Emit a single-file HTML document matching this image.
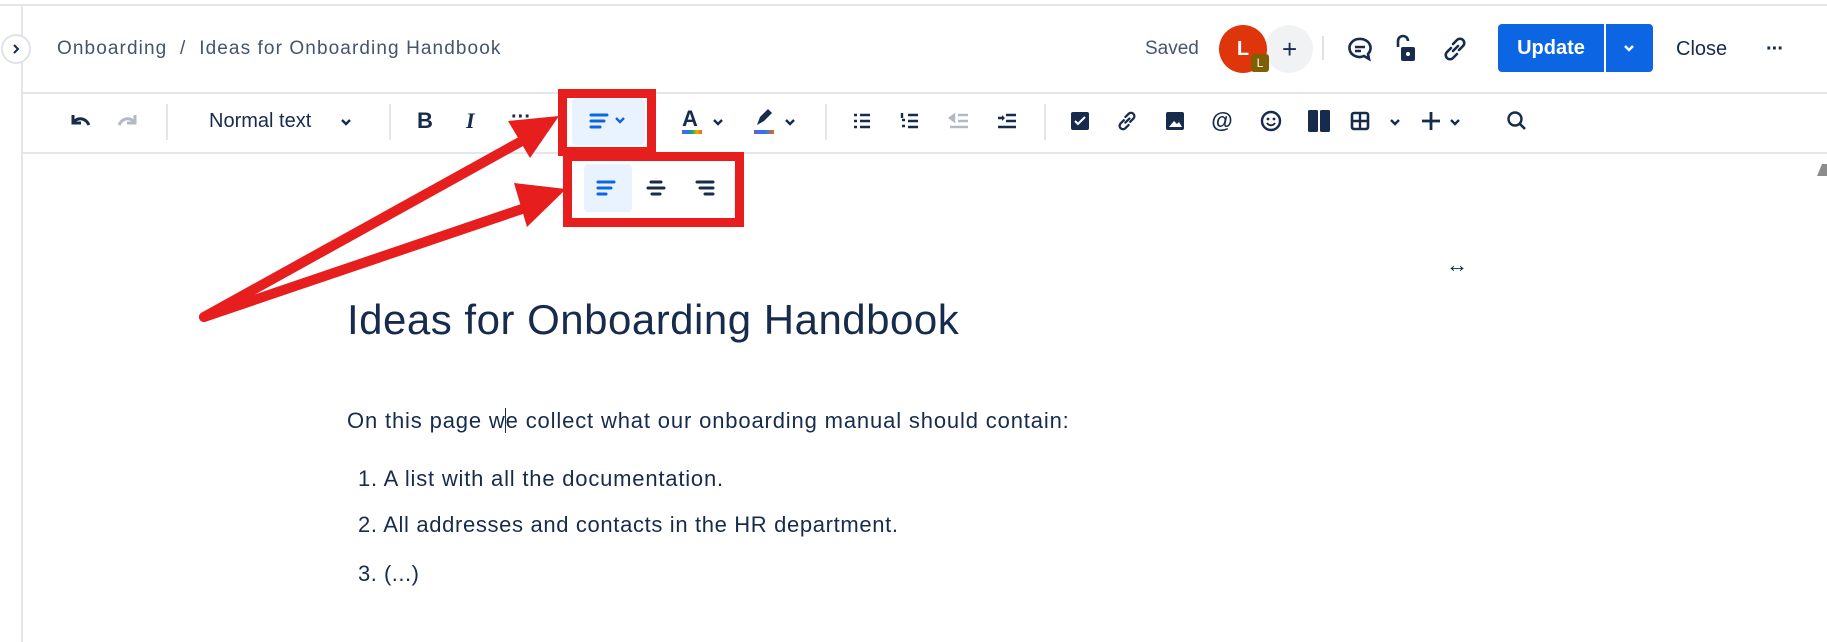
<!DOCTYPE html>
<html><head><meta charset="utf-8"><style>
*{margin:0;padding:0;box-sizing:border-box}
body{width:1827px;height:642px;background:#fff;position:relative;overflow:hidden;font-family:"Liberation Sans",sans-serif;color:#172b4d}
.a{position:absolute}
.ic{position:absolute;transform:translate(-50%,-50%)}
</style></head><body>
<div class="a" style="left:0;top:4px;width:1827px;height:2px;background:#e4e6ea"></div>
<div class="a" style="left:21px;top:5px;width:2px;height:637px;background:#e4e6ea"></div>
<div class="a" style="left:22px;top:92px;width:1805px;height:2px;background:#e4e6ea"></div>
<div class="a" style="left:22px;top:152px;width:1805px;height:2px;background:#e4e6ea"></div>
<div class="a" style="left:1px;top:34px;width:30px;height:30px;border-radius:50%;border:2px solid #e1e3e8;background:#fff"></div>
<svg class="a" style="left:10px;top:43px" width="12" height="12" viewBox="0 0 12 12"><path d="M4 2l4 4-4 4" stroke="#172b4d" stroke-width="2" fill="none"/></svg>
<div class="a" style="left:57px;top:38px;font-size:19px;color:#44546f;letter-spacing:1.1px;white-space:nowrap">Onboarding&nbsp;&nbsp;/&nbsp;&nbsp;Ideas for Onboarding Handbook</div>
<div class="a" style="left:1145px;top:38px;font-size:19px;color:#44546f">Saved</div>
<div class="a" style="left:1265px;top:25px;width:48px;height:48px;border-radius:50%;background:#f1f2f4"></div>
<div class="a" style="left:1282px;top:37px;font-size:26px;color:#172b4d;line-height:24px">+</div>
<div class="a" style="left:1219px;top:25px;width:48px;height:48px;border-radius:50%;background:#de350b;color:#fff;font-size:20px;text-align:center;line-height:48px;font-weight:bold">L</div>
<div class="a" style="left:1251px;top:54px;width:18px;height:18px;border-radius:3px;background:#7f5f01;color:#fff;font-size:12px;text-align:center;line-height:18px">L</div>
<div class="a" style="left:1322px;top:36px;width:2px;height:24px;background:#dfe1e6"></div>
<svg class="ic" style="left:1360px;top:49px" width="28" height="28" viewBox="0 0 28 28"><path d="M14 4a10 9 0 1 0 4 17l5 3-1-5A10 9 0 0 0 14 4z" fill="none" stroke="#172b4d" stroke-width="2.6"/><path d="M9 12h10M9 16h6" stroke="#172b4d" stroke-width="2.6"/></svg>
<svg class="ic" style="left:1405px;top:49px" width="24" height="30" viewBox="0 0 24 30"><path d="M5 13V7a5 5 0 0 1 10 0" fill="none" stroke="#172b4d" stroke-width="2.6"/><rect x="8" y="13" width="14" height="14" rx="2" fill="#172b4d"/><circle cx="15" cy="20" r="2" fill="#fff"/></svg>
<svg class="ic" style="left:1455px;top:49px" width="30" height="30" viewBox="0 0 30 30"><path d="M13 17l5-5M11 14l-4 4a4 4 0 0 0 6 6l4-4M19 16l4-4a4 4 0 0 0-6-6l-4 4" fill="none" stroke="#172b4d" stroke-width="2.6" stroke-linecap="round"/></svg>
<div class="a" style="left:1498px;top:24px;width:106px;height:48px;background:#0c66e4;border-radius:4px 0 0 4px;color:#fff;font-size:20px;font-weight:bold;text-align:center;line-height:48px">Update</div>
<div class="a" style="left:1606px;top:24px;width:47px;height:48px;background:#0c66e4;border-radius:0 4px 4px 0"></div>
<svg class="ic" style="left:1629px;top:48px" width="14" height="10" viewBox="0 0 14 10"><path d="M3 3l4 4 4-4" stroke="#fff" stroke-width="2.4" fill="none"/></svg>
<div class="a" style="left:1676px;top:38px;font-size:20px;color:#172b4d">Close</div>
<div class="a" style="left:1766px;top:38px;font-size:20px;font-weight:bold;letter-spacing:-1px">···</div>
<svg class="ic" style="left:80px;top:121px" width="26" height="20" viewBox="0 0 26 20"><path d="M6 4v8h8M6 12c4-6 12-6 16 2" fill="none" stroke="#172b4d" stroke-width="3"/></svg>
<svg class="ic" style="left:128px;top:121px" width="26" height="20" viewBox="0 0 26 20"><path d="M20 4v8h-8M20 12c-4-6-12-6-16 2" fill="none" stroke="#b3b9c4" stroke-width="3"/></svg>
<div class="a" style="left:166px;top:104px;width:2px;height:36px;background:#e4e6ea"></div>
<div class="a" style="left:209px;top:110px;font-size:20px">Normal text</div>
<svg class="ic" style="left:346px;top:122px" width="14" height="10" viewBox="0 0 14 10"><path d="M3 3l4 4 4-4" stroke="#172b4d" stroke-width="2.4" fill="none"/></svg>
<div class="a" style="left:389px;top:104px;width:2px;height:36px;background:#e4e6ea"></div>
<div class="a" style="left:417px;top:108px;font-size:22px;font-weight:bold">B</div>
<div class="a" style="left:466px;top:108px;font-size:22px;font-weight:bold;font-style:italic;font-family:'Liberation Serif',serif">I</div>
<div class="a" style="left:511px;top:106px;font-size:20px;font-weight:bold">···</div>
<div class="a" style="left:572px;top:98px;width:73px;height:47px;background:#e9f2ff;border-radius:4px"></div>
<svg class="ic" style="left:609px;top:121px" width="48" height="24" viewBox="0 0 48 24"><path d="M6 6h16M6 12h13M6 18h9" stroke="#0c66e4" stroke-width="3" stroke-linecap="round"/><path d="M31 9l4 4 4-4" stroke="#0c66e4" stroke-width="2.4" fill="none"/></svg>
<div class="a" style="left:682px;top:106px;font-size:22px;font-weight:bold">A</div>
<div class="a" style="left:682px;top:130px;width:20px;height:4px;background:linear-gradient(90deg,#6e5dc6,#1d7afc,#22a06b,#e2b203,#e56910)"></div>
<svg class="ic" style="left:718px;top:122px" width="14" height="10" viewBox="0 0 14 10"><path d="M3 3l4 4 4-4" stroke="#172b4d" stroke-width="2.4" fill="none"/></svg>
<svg class="ic" style="left:764px;top:118px" width="22" height="22" viewBox="0 0 22 22"><path d="M4 18l3-8 8-8 4 4-8 8z" fill="#172b4d"/></svg>
<div class="a" style="left:754px;top:130px;width:20px;height:4px;background:linear-gradient(90deg,#6e5dc6,#1d7afc,#e56910)"></div>
<svg class="ic" style="left:790px;top:122px" width="14" height="10" viewBox="0 0 14 10"><path d="M3 3l4 4 4-4" stroke="#172b4d" stroke-width="2.4" fill="none"/></svg>
<div class="a" style="left:825px;top:104px;width:2px;height:36px;background:#e4e6ea"></div>
<svg class="ic" style="left:862px;top:121px" width="20" height="20" viewBox="0 0 20 20"><path d="M2 4h3M8 4h10M2 10h3M8 10h10M2 16h3M8 16h10" stroke="#172b4d" stroke-width="2.6"/></svg>
<svg class="ic" style="left:910px;top:121px" width="20" height="20" viewBox="0 0 20 20"><path d="M2 2v5M8 4h10M2 9h3M8 10h10M2 15h3M8 16h10" stroke="#172b4d" stroke-width="2.4"/></svg>
<svg class="ic" style="left:959px;top:121px" width="22" height="20" viewBox="0 0 22 20"><path d="M10 4h10M10 10h10M2 16h18M2 7l4-3v6z" stroke="#b3b9c4" stroke-width="2.4" fill="#b3b9c4"/></svg>
<svg class="ic" style="left:1007px;top:121px" width="22" height="20" viewBox="0 0 22 20"><path d="M10 4h10M10 10h10M2 16h18M2 7h5" stroke="#172b4d" stroke-width="2.4"/><path d="M6 4l3 3-3 3z" fill="#172b4d"/></svg>
<div class="a" style="left:1044px;top:104px;width:2px;height:36px;background:#e4e6ea"></div>
<svg class="ic" style="left:1080px;top:121px" width="20" height="20" viewBox="0 0 20 20"><rect x="1" y="1" width="18" height="18" rx="2" fill="#172b4d"/><path d="M5 10l3 3 7-7" stroke="#fff" stroke-width="2" fill="none"/></svg>
<svg class="ic" style="left:1127px;top:121px" width="24" height="24" viewBox="0 0 30 30"><path d="M13 17l5-5M11 14l-4 4a4 4 0 0 0 6 6l4-4M19 16l4-4a4 4 0 0 0-6-6l-4 4" fill="none" stroke="#172b4d" stroke-width="2.8" stroke-linecap="round"/></svg>
<svg class="ic" style="left:1175px;top:121px" width="20" height="20" viewBox="0 0 20 20"><rect x="1" y="1" width="18" height="18" rx="2" fill="#172b4d"/><path d="M4 16l5-6 3 3 2-2 3 5z" fill="#fff"/></svg>
<div class="ic" style="left:1222px;top:121px;font-size:22px;font-weight:bold">@</div>
<svg class="ic" style="left:1271px;top:121px" width="22" height="22" viewBox="0 0 22 22"><circle cx="11" cy="11" r="9" fill="none" stroke="#172b4d" stroke-width="2.4"/><circle cx="8" cy="9" r="1.4" fill="#172b4d"/><circle cx="14" cy="9" r="1.4" fill="#172b4d"/><path d="M7 13c2 3 6 3 8 0" stroke="#172b4d" stroke-width="2" fill="none"/></svg>
<svg class="ic" style="left:1319px;top:121px" width="24" height="24" viewBox="0 0 24 24"><rect x="1" y="1" width="10" height="22" rx="1.5" fill="#172b4d"/><rect x="13" y="1" width="10" height="22" rx="1.5" fill="#172b4d"/></svg>
<svg class="ic" style="left:1360px;top:121px" width="20" height="20" viewBox="0 0 20 20"><rect x="2" y="2" width="16" height="16" rx="2" fill="none" stroke="#172b4d" stroke-width="2.6"/><path d="M10 2v16M2 10h16" stroke="#172b4d" stroke-width="2.4"/></svg>
<svg class="ic" style="left:1395px;top:122px" width="14" height="10" viewBox="0 0 14 10"><path d="M3 3l4 4 4-4" stroke="#172b4d" stroke-width="2.4" fill="none"/></svg>
<svg class="ic" style="left:1431px;top:121px" width="22" height="22" viewBox="0 0 22 22"><path d="M11 2v18M2 11h18" stroke="#172b4d" stroke-width="2.8"/></svg>
<svg class="ic" style="left:1455px;top:122px" width="14" height="10" viewBox="0 0 14 10"><path d="M3 3l4 4 4-4" stroke="#172b4d" stroke-width="2.4" fill="none"/></svg>
<svg class="ic" style="left:1517px;top:121px" width="22" height="22" viewBox="0 0 22 22"><circle cx="9" cy="9" r="6.5" fill="none" stroke="#172b4d" stroke-width="2.4"/><path d="M14 14l5 5" stroke="#172b4d" stroke-width="2.6"/></svg>
<svg class="a" style="left:1815px;top:162px" width="12" height="14" viewBox="0 0 12 14"><path d="M2 14L7 2h5v12z" fill="#8c8c8c"/></svg>
<div class="a" style="left:572px;top:161px;width:162px;height:57px;background:#fff;box-shadow:0 4px 10px rgba(9,30,66,.15)"></div>
<div class="a" style="left:584px;top:164px;width:48px;height:48px;background:#e9f2ff;border-radius:4px"></div>
<svg class="ic" style="left:606px;top:188px" width="22" height="20" viewBox="0 0 22 20"><path d="M3 4h16M3 10h13M3 16h8" stroke="#0c66e4" stroke-width="3" stroke-linecap="round"/></svg>
<svg class="ic" style="left:656px;top:188px" width="22" height="20" viewBox="0 0 22 20"><path d="M6 4h10M3 10h16M7 16h8" stroke="#172b4d" stroke-width="3" stroke-linecap="round"/></svg>
<svg class="ic" style="left:705px;top:188px" width="22" height="20" viewBox="0 0 22 20"><path d="M3 4h16M6 10h13M11 16h8" stroke="#172b4d" stroke-width="3" stroke-linecap="round"/></svg>
<div class="a" style="left:558px;top:89px;width:98px;height:67px;border:9px solid #e61e1e"></div>
<div class="a" style="left:563px;top:152px;width:181px;height:75px;border:9px solid #e61e1e"></div>
<svg class="a" style="left:0;top:0" width="1827" height="642" viewBox="0 0 1827 642">
<g stroke="#e61e1e" stroke-width="10" stroke-linecap="round"><path d="M204 317L520 142"/><path d="M204 317L525 208"/></g>
<path d="M559 116L508 121L530 158z" fill="#e61e1e"/>
<path d="M566 189L514 183L527 227z" fill="#e61e1e"/>
</svg>
<div class="a" style="left:1446px;top:252px;font-size:22px;font-weight:bold">↔</div>
<div class="a" style="left:347px;top:296px;font-size:42px;color:#172b4d;white-space:nowrap;letter-spacing:0.5px">Ideas for Onboarding Handbook</div>
<div class="a" style="left:347px;top:408px;font-size:22px;white-space:nowrap;letter-spacing:0.85px">On this page w<span style="border-left:1.5px solid #172b4d;margin-left:-1px"></span>e collect what our onboarding manual should contain:</div>
<div class="a" style="left:358px;top:466px;font-size:22px;white-space:nowrap;letter-spacing:0.8px">1. A list with all the documentation.</div>
<div class="a" style="left:358px;top:512px;font-size:22px;white-space:nowrap;letter-spacing:0.65px">2. All addresses and contacts in the HR department.</div>
<div class="a" style="left:358px;top:561px;font-size:22px;white-space:nowrap;letter-spacing:0.5px">3. (...)</div>
</body></html>
